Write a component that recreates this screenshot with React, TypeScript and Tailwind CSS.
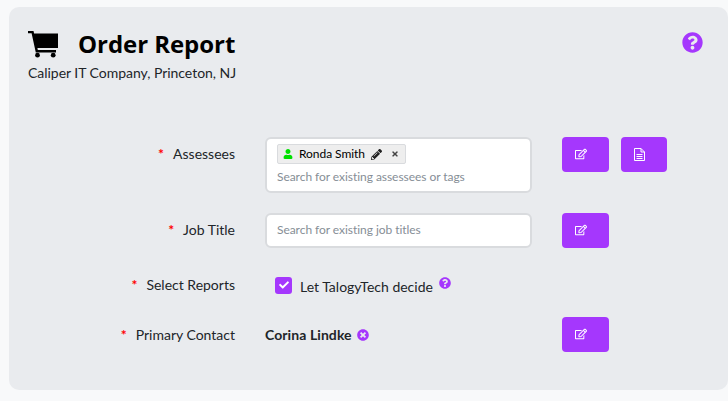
import React from "react";
import {
  FaCheck,
  FaPencilAlt,
  FaQuestionCircle,
  FaRegEdit,
  FaTimes,
  FaTimesCircle,
  FaUser,
} from "react-icons/fa";

function CartIcon() {
  return (
    <svg width="30" height="27" viewBox="0 0 30 27" className="shrink-0 text-black">
      <path d="M0 0h5.500l.6 2.500H30v14.500H9.400l.4 2H28v2.400H7.800L3.600 2.200H0z" fill="currentColor" />
      <circle cx="9.500" cy="24.200" r="2.400" fill="currentColor" />
      <circle cx="25.200" cy="24.200" r="2.400" fill="currentColor" />
    </svg>
  );
}

function DocIcon() {
  return (
    <svg width="11" height="13" viewBox="0 0 11 13" fill="none" stroke="currentColor" strokeWidth="1">
      <path d="M.5.5h6.500l3.500 3.500v8.500h-10z" />
      <path d="M7 .5v3.500h3.500" />
      <path d="M2.500 6.500h6M2.500 8.500h6M2.500 10.500h6" strokeWidth="1.200" />
    </svg>
  );
}

function Label({ text }: { text: string }) {
  return (
    <div className="w-[226px] shrink-0 text-right text-[14px] leading-[20px] text-[#212529]">
      <span className="mr-[9px] font-bold text-[#ff0000]">*</span>
      {text}
    </div>
  );
}

function ActionButton({ doc = false }: { doc?: boolean }) {
  return (
    <button
      className={`flex h-[35px] items-center rounded-[4px] bg-[#a537fd] pl-[13px] text-white ${doc ? "w-[46px]" : "w-[47px]"}`}
    >
      {doc ? <DocIcon /> : <FaRegEdit size={12} className="mb-[2px]" />}
    </button>
  );
}

export default function App() {
  return (
    <div className="h-[401px] w-[728px] overflow-hidden bg-[#f8f9fa] pt-[7px] pl-[9px] font-['Lato',sans-serif]">
      <div className="h-[383px] rounded-[10px] bg-[#e9ebee] pt-[21px] pl-[19px] pr-[25px]">
        <div className="flex justify-between">
          <div>
            <div className="flex h-[32px] items-center">
              <CartIcon />
              <h1 className="ml-[20px] font-['Open_Sans',sans-serif] text-[24px] leading-[32px] font-bold tracking-[-0.05px] text-black">
                Order Report
              </h1>
            </div>
            <p className="mt-[3px] text-[14px] leading-[20px] tracking-[-0.03px] text-[#212529]">
              Caliper IT Company, Princeton, NJ
            </p>
          </div>
          <FaQuestionCircle size={21} className="mt-[4px] text-[#a537fd]" />
        </div>

        <div className="mt-[54px] -ml-[19px] flex flex-col">
          <div className="flex">
            <div className="pt-[7px]">
              <Label text="Assessees" />
            </div>
            <div className="ml-[30px] flex h-[56px] w-[267px] flex-col rounded-[6px] border-2 border-[#d9dbde] bg-white pl-[10px]">
              <div className="mt-[5px] flex h-[20px] w-[129px] items-center rounded-[2px] border border-[#d9dbde] bg-[#eeeeee] pl-[5px] text-[12px] tracking-[-0.05px] text-black">
                <FaUser size={10} className="text-[#00e000]" />
                <span className="ml-[6px]">Ronda Smith</span>
                <FaPencilAlt size={11} className="ml-[6px] text-[#222222]" />
                <FaTimes size={8} className="ml-[9px] text-[#444444]" />
              </div>
              <div className="mt-[4px] text-[12px] leading-[18px] tracking-[-0.05px] text-[#868e96]">
                Search for existing assessees or tags
              </div>
            </div>
            <div className="ml-[30px] flex gap-[12px]">
              <ActionButton />
              <ActionButton doc />
            </div>
          </div>

          <div className="mt-[20px] flex items-center">
            <div className="pb-[1px]">
              <Label text="Job Title" />
            </div>
            <div className="ml-[30px] flex h-[35px] w-[267px] items-center rounded-[6px] border-2 border-[#d9dbde] bg-white pb-[1px] pl-[10px] text-[12px] tracking-[-0.05px] text-[#868e96]">
              Search for existing job titles
            </div>
            <div className="ml-[30px]">
              <ActionButton />
            </div>
          </div>

          <div className="mt-[27px] flex h-[20px] items-center">
            <Label text="Select Reports" />
            <div className="ml-[40px] flex h-[17px] w-[17px] items-center justify-center rounded-[3px] bg-[#a537fd] text-white">
              <FaCheck size={10} />
            </div>
            <span className="ml-[8px] mt-[3px] text-[14px] text-[#212529]">Let TalogyTech decide</span>
            <FaQuestionCircle size={12} className="mb-[5px] ml-[6px] text-[#a537fd]" />
          </div>

          <div className="mt-[22px] flex items-center">
            <Label text="Primary Contact" />
            <div className="ml-[30px] flex w-[267px] items-center">
              <span className="text-[14px] font-bold tracking-[0.08px] text-[#212529]">Corina Lindke</span>
              <FaTimesCircle size={12} className="ml-[5px] text-[#a537fd]" />
            </div>
            <div className="ml-[30px]">
              <ActionButton />
            </div>
          </div>
        </div>
      </div>
    </div>
  );
}
